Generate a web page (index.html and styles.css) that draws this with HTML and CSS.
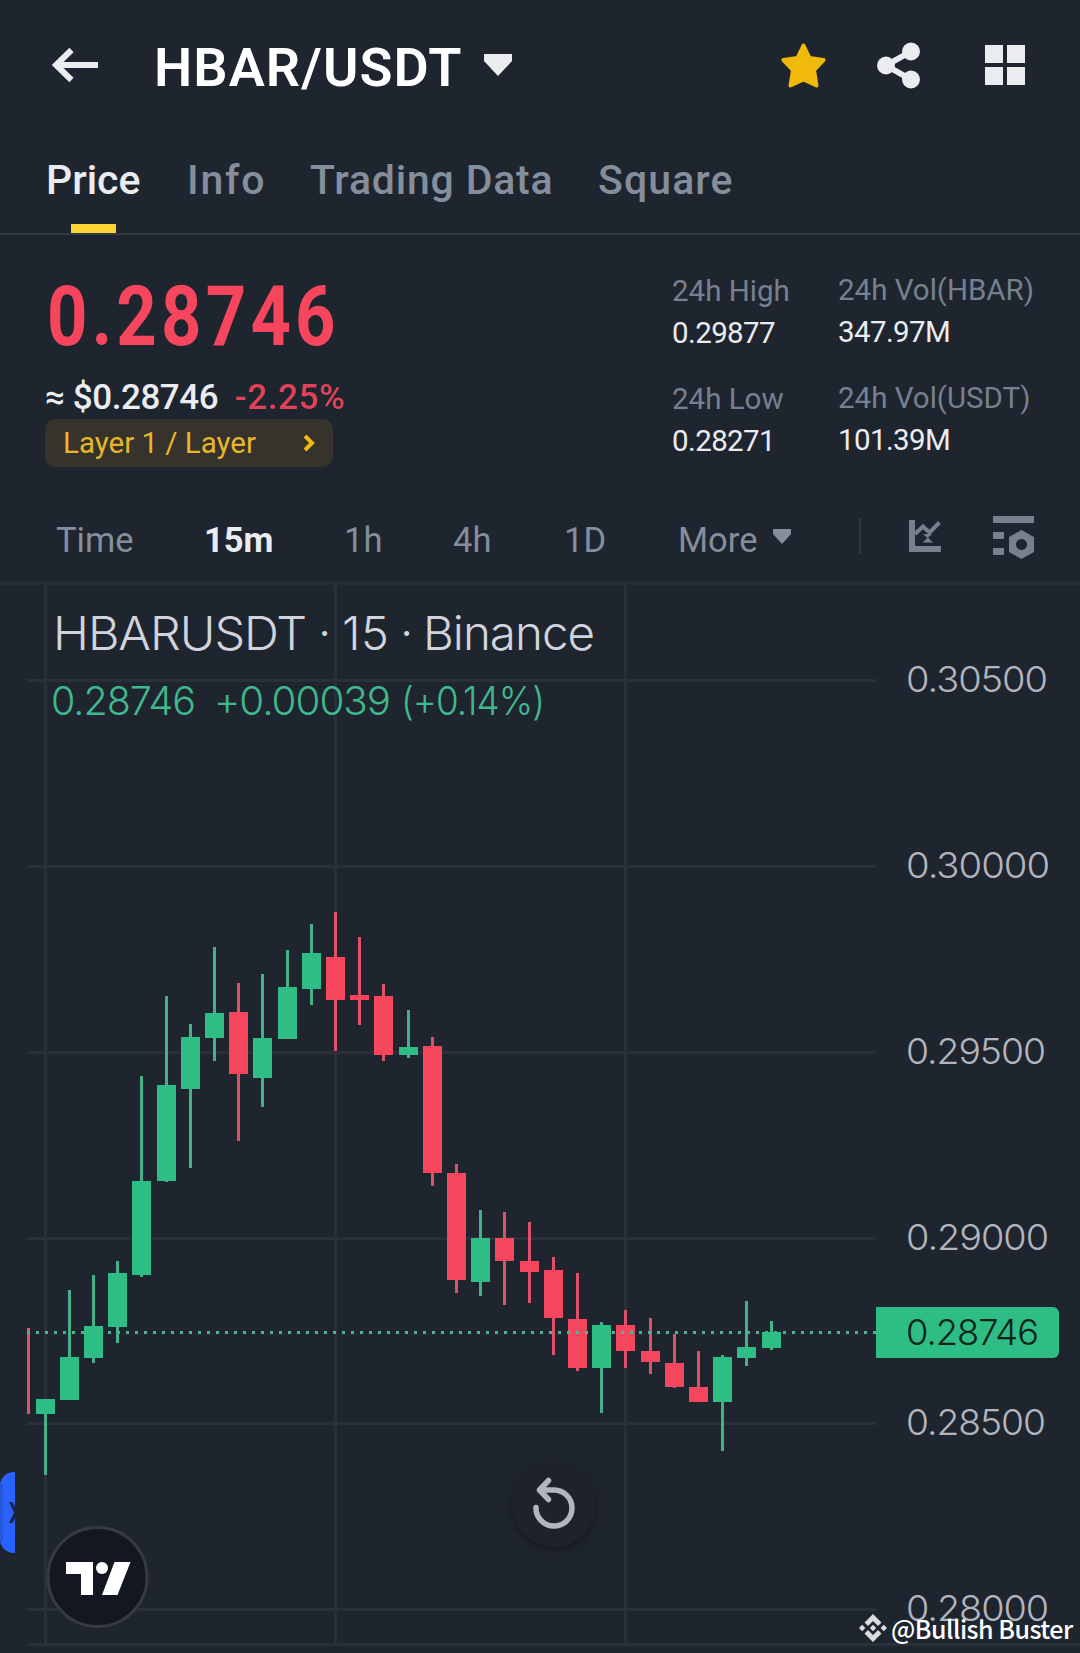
FILE: index.html
```html
<!DOCTYPE html>
<html lang="en">
<head>
<meta charset="utf-8">
<title>HBAR/USDT</title>
<link rel="stylesheet" href="styles.css">
</head>
<body>
<header class="topbar">
  <svg class="back" width="46" height="36" viewBox="0 0 46 36"><path d="M19.5 3 4 18l15.500 15M4 18H46" fill="none" stroke="#eaecef" stroke-width="6"/></svg>
  <h1 class="pair">HBAR/USDT</h1>
  <svg class="caret" width="28" height="22" viewBox="0 0 28 22"><path d="M0 0H28V7L14 22 0 7z" fill="#eaecef"/></svg>
  <div class="actions">
    <svg width="45" height="47" viewBox="0 0 45 47"><path d="M22.500 3.500 28.500 16 42.500 18 33 28 35.500 43.500 22.500 37.500 9.500 43.500 12 28 2.500 18 16.500 16z" fill="#f0b90b" stroke="#f0b90b" stroke-width="4" stroke-linejoin="round"/></svg>
    <svg class="share" width="43" height="47" viewBox="0 0 43 47"><path d="M34 9.500 9 23.500l25 14" fill="none" stroke="#eaecef" stroke-width="6"/><g fill="#eaecef"><circle cx="34" cy="9.500" r="9"/><circle cx="9" cy="23.500" r="9"/><circle cx="34" cy="37.500" r="9"/></g></svg>
    <svg class="grid" width="40" height="40" viewBox="0 0 40 40"><path d="M0 0h18v18H0zM22 0h18v18H22zM0 22h18v18H0zM22 22h18v18H22z" fill="#eaecef"/></svg>
  </div>
</header>

<nav class="tabs">
  <a class="tab tab-active">Price</a>
  <a class="tab tab-info">Info</a>
  <a class="tab tab-data">Trading Data</a>
  <a class="tab tab-square">Square</a>
</nav>

<section class="overview">
  <div class="quote">
    <div class="last">0.28746</div>
    <div class="sub"><span class="fiat">≈ $0.28746</span><span class="change">-2.25%</span></div>
    <div class="badge"><span>Layer 1 / Layer</span><svg width="12" height="18" viewBox="0 0 12 18"><path d="M2 2l7 7-7 7" fill="none" stroke="#f0b90b" stroke-width="4"/></svg></div>
  </div>
  <dl class="stats">
    <div><dt>24h High</dt><dd>0.29877</dd></div>
    <div class="vol"><dt>24h Vol(HBAR)</dt><dd>347.97M</dd></div>
    <div><dt>24h Low</dt><dd>0.28271</dd></div>
    <div class="vol"><dt>24h Vol(USDT)</dt><dd>101.39M</dd></div>
  </dl>
</section>

<nav class="frames">
  <a>Time</a><a class="frame-active">15m</a><a>1h</a><a>4h</a><a>1D</a>
  <a class="more">More<svg width="18" height="15" viewBox="0 0 18 15"><path d="M0 0H18V5L9 15 0 5z" fill="#848e9c"/></svg></a>
  <span class="divider"></span>
  <svg class="ind" width="32" height="33" viewBox="0 0 32 33"><path d="M0 0H6V26H32V32H0z" fill="#76808f"/><path d="M6 14 14 6.500l6.500 6L30.500 2.500" fill="none" stroke="#76808f" stroke-width="4"/><path d="M14 14h9l-4.500 4zM13.500 22.500h10.500l-5-5z" fill="#76808f"/></svg>
  <svg class="conf" width="41" height="43" viewBox="0 0 41 43"><path d="M0 0H41V7H0zM0 16H11V23H0zM0 32H11V39H0z" fill="#76808f"/><path fill-rule="evenodd" d="M28.500 14 41 21v15l-12.500 7L16 36V21zM28.500 23a5.500 5.500 0 1 0 .01 0z" fill="#76808f"/></svg>
</nav>

<main class="chart">
<svg class="plot" width="1080" height="1068" viewBox="0 585 1080 1068">
  <g class="gridlines">
    <path d="M45.500 585V1644M335.500 585V1644M625.500 585V1644"/>
    <path d="M27 680.500H876M27 866.500H876M27 1052.500H876M27 1238.500H876M27 1423.500H876M27 1609.500H876M27 1644.500H1080"/>
  </g>
  <path class="wick down" d="M28.500 1328V1414M238.500 983V1141M335.500 912V1051M359.500 937V1025M383.500 984V1061M432.500 1037V1186M456.500 1164V1293M504.500 1212V1305M529.500 1222V1303M553.500 1257V1355M577.500 1273V1371M625.500 1310V1368M650.500 1318V1374M674.500 1334V1388M698.500 1351V1390"/>
  <path class="wick up" d="M45.500 1399V1475M69.500 1290V1360M93.500 1275V1363M117.500 1261V1343M141.500 1076V1277M166.500 996V1182M190.500 1024V1168M214.500 947V1061M262.500 974V1107M287.500 950V1030M311.500 924V1005M408.500 1010V1058M480.500 1210V1296M601.500 1322V1413M722.500 1355V1451M746.500 1301V1366M771.500 1321V1350"/>
  <path class="body-down" d="M229 1012h19v62h-19zM326 957h19v43h-19zM350 995h19v5h-19zM374 996h19v59h-19zM423 1046h19v127h-19zM447 1173h19v107h-19zM495 1238h19v23h-19zM520 1261h19v11h-19zM544 1270h19v48h-19zM568 1319h19v49h-19zM616 1325h19v26h-19zM641 1351h19v11h-19zM665 1363h19v24h-19zM689 1387h19v15h-19z"/>
  <path class="price-line" d="M27 1332.500H876"/>
  <path class="body-up" d="M36 1399h19v15h-19zM60 1357h19v43h-19zM84 1326h19v32h-19zM108 1273h19v54h-19zM132 1181h19v94h-19zM157 1085h19v96h-19zM181 1037h19v52h-19zM205 1013h19v25h-19zM253 1038h19v40h-19zM278 987h19v52h-19zM302 953h19v36h-19zM399 1047h19v8h-19zM471 1238h19v44h-19zM592 1325h19v43h-19zM713 1357h19v45h-19zM737 1347h19v11h-19zM762 1332h19v16h-19z"/>
  <g class="legend-title">
    <text x="53" y="650" textLength="253" lengthAdjust="spacingAndGlyphs">HBARUSDT</text><text x="318" y="650">·</text><text x="342" y="650" textLength="46">15</text><text x="400" y="650">·</text><text x="423" y="650" textLength="171" lengthAdjust="spacingAndGlyphs">Binance</text>
  </g>
  <g class="legend-value">
    <text x="51" y="715" textLength="144" lengthAdjust="spacingAndGlyphs">0.28746</text><text x="214" y="715" textLength="176" lengthAdjust="spacingAndGlyphs">+0.00039</text><text x="401" y="715" textLength="143" lengthAdjust="spacingAndGlyphs">(+0.14%)</text>
  </g>
  <g class="axis">
    <text x="906" y="692" textLength="141" lengthAdjust="spacingAndGlyphs">0.30500</text>
    <text x="906" y="878" textLength="143" lengthAdjust="spacingAndGlyphs">0.30000</text>
    <text x="906" y="1064" textLength="139" lengthAdjust="spacingAndGlyphs">0.29500</text>
    <text x="906" y="1250" textLength="142" lengthAdjust="spacingAndGlyphs">0.29000</text>
    <text x="906" y="1435" textLength="139" lengthAdjust="spacingAndGlyphs">0.28500</text>
    <text x="906" y="1621" textLength="142" lengthAdjust="spacingAndGlyphs">0.28000</text>
  </g>
  <path d="M876 1307H1053a6 6 0 0 1 6 6V1352a6 6 0 0 1-6 6H876z" fill="#2ebd85"/>
  <text class="tag" x="906" y="1345" textLength="132" lengthAdjust="spacingAndGlyphs">0.28746</text>

  <path d="M15 1472V1553H14A14 14 0 0 1 0 1539V1486A14 14 0 0 1 14 1472z" fill="#2962ff"/>
  <path d="M1.500 1541V1484" stroke="#2456dc" stroke-width="3"/>
  <path d="M9 1502h3.500l2.500 5v11l-2.500 5H9l5-10.500z" fill="#1b2440"/>

  <circle cx="97.500" cy="1577" r="49.500" fill="#131722" stroke="#363a45" stroke-width="3"/>
  <path d="M66 1562H93V1595H81V1574H66zM114.500 1562H130.500L117.500 1595H102z" fill="#fff"/><circle cx="102" cy="1568" r="6" fill="#fff"/>

  <circle class="reset" cx="554" cy="1505" r="42"/>
  <path d="M536 1507.500A18 18 0 1 0 554 1490H541M548.500 1480.500 539.500 1490l9 9.500" fill="none" stroke="#b2b5be" stroke-width="5.500" stroke-linecap="round" stroke-linejoin="round"/>
</svg>
<div class="watermark">
  <svg width="28" height="28" viewBox="0 0 28 28" fill="#dcdcdc"><path d="M14 0 22.500 8.500 19 12 14 7 9 12 5.500 8.500zM14 28 22.500 19.500 19 16 14 21 9 16 5.500 19.500zM14 10.800 17.200 14 14 17.200 10.800 14zM3.200 10.800 6.400 14 3.200 17.200 0 14zM24.800 10.800 28 14 24.800 17.200 21.600 14z"/></svg>
  <span>@Bullish Buster</span>
</div>
</main>
</body>
</html>
```
FILE: styles.css
```css
* { box-sizing: border-box; }
body {
  margin: 0;
  width: 1080px;
  height: 1653px;
  overflow: hidden;
  background: #1f252f;
  color: #eaecef;
  font-family: Roboto, "Liberation Sans", sans-serif;
}
svg { display: block; flex: none; }

.topbar { display: flex; align-items: center; height: 130px; padding: 0 55px 0 52px; }
.pair { margin: 5px 0 0 56px; width: 307px; font-size: 54px; line-height: 60px; font-weight: 600; letter-spacing: 1.1px; color: #fff; white-space: nowrap; }
.caret { margin-left: 23px; }
.actions { display: flex; align-items: center; margin-left: auto; }
.share { margin-left: 51px; }
.grid { margin-left: 65px; }

.tabs { display: flex; height: 105px; padding: 25px 0 0 46px; border-bottom: 2px solid #333943; }
.tab { position: relative; height: 78px; font-size: 41px; line-height: 50px; font-weight: 500; color: #848e9c; white-space: nowrap; }
.tab-active { width: 141px; color: #eaecef; }
.tab-info { width: 123px; letter-spacing: 1.8px; }
.tab-data { width: 288px; letter-spacing: .8px; }
.tab-square { letter-spacing: 1.1px; }
.tab-active::after { content: ""; position: absolute; left: 25px; bottom: 0; width: 45px; height: 9px; background: #fcd535; }

.overview { display: flex; height: 264px; padding: 35px 0 0 45px; }
.quote { width: 627px; padding-top: 2px; }
.last { height: 90px; line-height: 90px; margin-left: 2px; font-size: 84px; font-weight: 700; color: #f6465d; letter-spacing: 5px; transform: scaleX(.84); transform-origin: 0 0; }
.sub { display: flex; gap: 16px; margin-top: 16px; height: 40px; line-height: 40px; font-size: 35px; font-weight: 500; white-space: nowrap; }
.fiat { width: 174px; letter-spacing: -.45px; }
.change { color: #f6465d; opacity: .9; letter-spacing: .6px; }
.badge { display: flex; align-items: center; justify-content: space-between; margin-top: 1px; width: 288px; height: 48px; padding: 0 18px; border-radius: 10px; background: #35332b; color: #e8b62a; font-size: 29.5px; white-space: nowrap; }

.stats { display: grid; grid-template-columns: 166px 220px; row-gap: 24px; margin: 0; align-content: start; white-space: nowrap; font-size: 29.5px; line-height: 42px; }
.stats dt { color: #76808f; }
.stats dd { margin: 0; letter-spacing: -.6px; }
.vol { margin-top: -1px; }

.frames { display: grid; grid-template-columns: 148px 140px 109px 111px 114px 181px 50px 84px 41px; align-items: center; height: 86px; padding-left: 56px; border-bottom: 4px solid #262c36; font-size: 34.5px; line-height: 40px; color: #848e9c; }
.frame-active { font-weight: 700; color: #eaecef; }
.more { display: flex; align-items: center; gap: 16px; }
.more svg { margin-top: -7px; }
.divider { width: 2px; height: 36px; margin-top: -8px; background: #333943; }
.ind { margin-top: -8px; }
.conf { margin-top: -6px; }

.chart { position: relative; height: 1068px; }
.gridlines path { fill: none; stroke: #2a303a; stroke-width: 3; }
.wick { fill: none; stroke-width: 3; }
.wick.up { stroke: #45b187; }
.wick.down { stroke: #dc5267; }
.body-up { fill: #2ebd85; }
.body-down { fill: #f6465d; }
.price-line { stroke: #4fb494; stroke-width: 3; stroke-dasharray: 3 6; }
.plot text { font-family: Inter, "Liberation Sans", sans-serif; font-weight: 300; letter-spacing: -1px; }
.legend-title { font-size: 47px; fill: #d1d4dc; }
.legend-value { font-size: 39px; fill: #3fb98c; }
.axis { font-size: 36px; fill: #b2b5be; }
.tag { font-size: 36px; fill: #0b2318; }
.reset { fill: #1e222d; filter: drop-shadow(0 3px 4px rgba(0, 0, 0, .35)); }

.watermark { position: absolute; left: 859px; bottom: 8px; display: flex; align-items: center; gap: 4px; height: 34px; color: #fff; font: 500 25px/34px "Noto Sans CJK SC", "Noto Sans", sans-serif; letter-spacing: -.5px; white-space: nowrap; }
```
